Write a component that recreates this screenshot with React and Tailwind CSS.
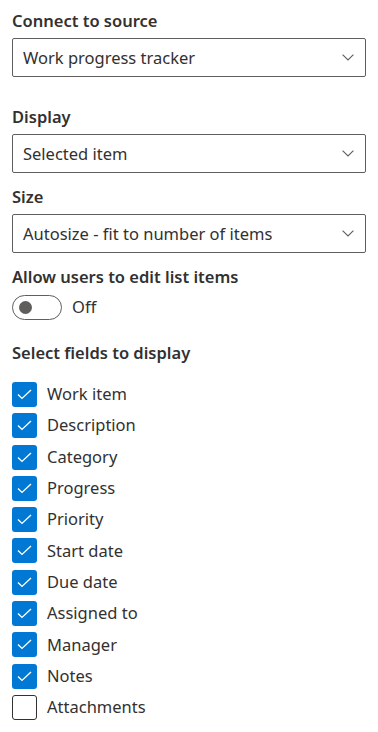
import React from 'react';

const font = { fontFamily: '"Segoe UI", "Noto Sans", sans-serif' };

const fields = [
    { name: 'Work item', checked: true },
    { name: 'Description', checked: true },
    { name: 'Category', checked: true },
    { name: 'Progress', checked: true },
    { name: 'Priority', checked: true },
    { name: 'Start date', checked: true },
    { name: 'Due date', checked: true },
    { name: 'Assigned to', checked: true },
    { name: 'Manager', checked: true },
    { name: 'Notes', checked: true },
    { name: 'Attachments', checked: false },
];

const Chevron = () => (
    <svg width="12" height="7" viewBox="0 0 12 7" fill="none">
        <path d="M0.6 0.6 L6 6 L11.4 0.6" stroke="#605e5c" strokeWidth="1.1" />
    </svg>
);

const Label = ({ children, className = '' }) => (
    <div className={`h-[24px] leading-[24px] text-[16.5px] font-semibold text-[#323130] ${className}`}>{children}</div>
);

const Dropdown = ({ value }) => (
    <div className="mt-[5px] h-[39px] flex items-center justify-between border border-[#605e5c] rounded-[2px] pl-[10px] pr-[11px] bg-white">
        <span className="text-[16.5px] text-[#323130] pt-[1px]">{value}</span>
        <Chevron />
    </div>
);

const Check = ({ checked }) =>
    checked ? (
        <div className="w-[25px] h-[25px] rounded-[3px] bg-[#0078d4] flex items-center justify-center">
            <svg width="15" height="11" viewBox="0 0 15 11" fill="none">
                <path d="M1 5.6 L5 9.4 L14 1" stroke="white" strokeWidth="1.4" />
            </svg>
        </div>
    ) : (
        <div className="w-[25px] h-[25px] rounded-[3px] border border-[#323130] bg-white" />
    );

export default function App() {
    return (
        <div className="min-h-screen bg-white px-[12px] pt-[9px]" style={font}>
            <Label>Connect to source</Label>
            <Dropdown value="Work progress tracker" />

            <Label className="mt-[28px]">Display</Label>
            <Dropdown value="Selected item" />

            <Label className="mt-[12px]">Size</Label>
            <Dropdown value="Autosize - fit to number of items" />

            <Label className="mt-[12px]">Allow users to edit list items</Label>
            <div className="mt-[6px] flex items-center gap-[10px]">
                <div className="w-[50px] h-[25px] rounded-full border border-[#605e5c] flex items-center">
                    <div className="ml-[6px] w-[13px] h-[13px] rounded-full bg-[#605e5c]" />
                </div>
                <span className="text-[16.5px] text-[#323130]">Off</span>
            </div>

            <Label className="mt-[21px]">Select fields to display</Label>
            <div className="mt-[17px] flex flex-col gap-[6.3px]">
                {fields.map((f) => (
                    <div key={f.name} className="flex items-center gap-[10px] h-[25px]">
                        <Check checked={f.checked} />
                        <span className="text-[16.5px] text-[#323130]">{f.name}</span>
                    </div>
                ))}
            </div>
        </div>
    );
}
